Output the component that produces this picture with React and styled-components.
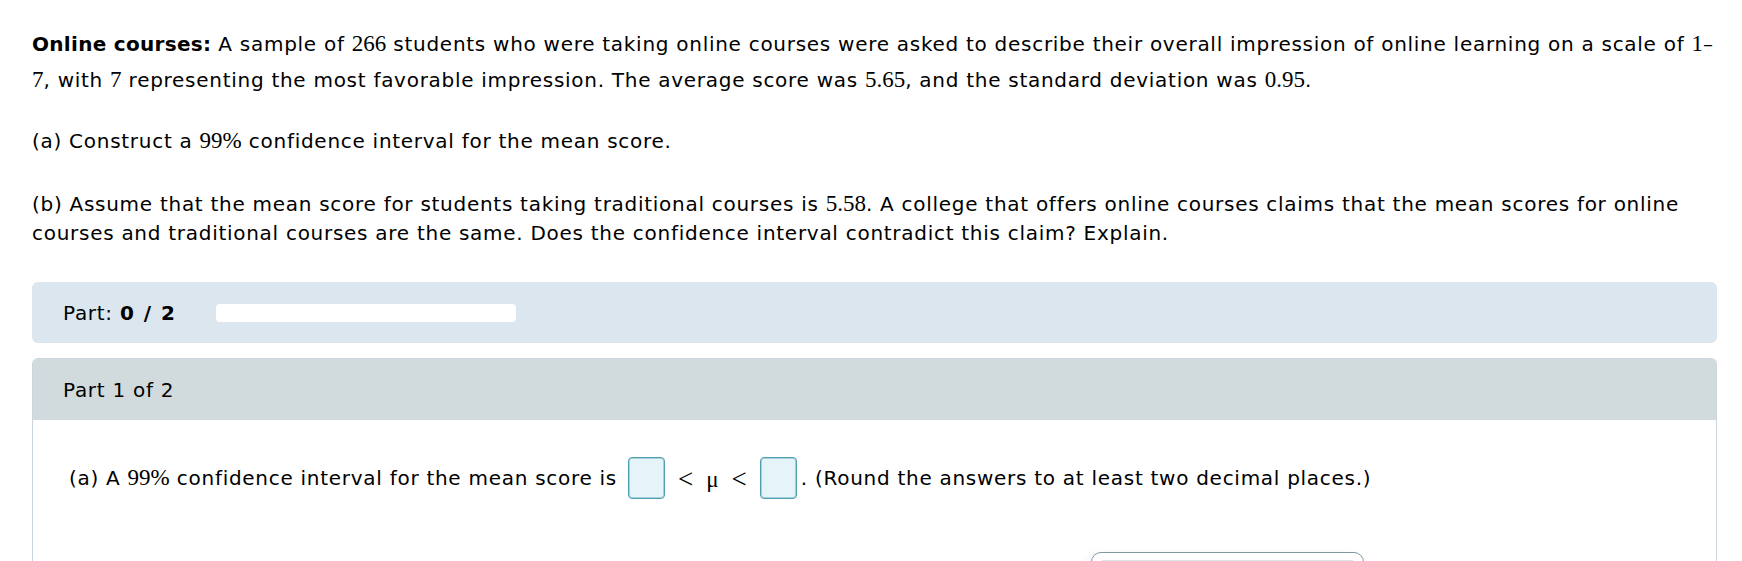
import React from "react";
import styled, { createGlobalStyle } from "styled-components";

const GlobalStyle = createGlobalStyle`
  body {
    margin: 0;
    background: #fff;
    color: #000;
    font-family: "DejaVu Sans", Verdana, sans-serif;
    font-size: 20px;
    letter-spacing: 0.72px;
  }
`;

const Page = styled.div`
  padding: 26px 25px 0 32px;
`;

const Para = styled.p`
  margin: ${(p) => p.$mt || 0}px 0 0 0;
  line-height: ${(p) => p.$lh || 29}px;
`;

const Bold = styled.b`
  font-weight: bold;
  letter-spacing: 0.3px;
`;

const M = styled.span`
  font-family: "Liberation Serif", "Times New Roman", serif;
  font-size: 23px;
  letter-spacing: 0;
`;

const ProgressPanel = styled.div`
  margin-top: 34px;
  height: 61px;
  background: #dbe6ef;
  border-radius: 6px;
  display: flex;
  align-items: center;
  padding-left: 31px;
  gap: 40px;
`;

const Score = styled(Bold)`
  letter-spacing: 1.5px;
`;

const Bar = styled.div`
  width: 300px;
  height: 18px;
  background: #fff;
  border-radius: 4px;
`;

const Card = styled.div`
  margin-top: 15px;
  border: 1px solid #cbd5db;
  border-bottom: none;
  border-radius: 6px 6px 0 0;
  overflow: hidden;
`;

const CardHeader = styled.div`
  height: 61px;
  background: #d1dadd;
  display: flex;
  align-items: center;
  padding-left: 30px;
`;

const CardBody = styled.div`
  padding: 37px 0 0 36px;
`;

const AnswerRow = styled.div`
  display: flex;
  align-items: center;
  height: 42px;
  white-space: pre;
`;

const AnswerBox = styled.span`
  display: inline-block;
  width: 35px;
  height: 40px;
  border: 1px solid #4f9fb0;
  border-radius: 4px;
  background: #e5f4f8;
  box-shadow: inset 0 0 0 1px #a8d0d9;
  margin: 0 ${(p) => p.$mr || 0}px 0 ${(p) => p.$ml || 0}px;
`;

const Rel = styled(M)`
  font-size: 27px;
  margin: 0 13px;
  position: relative;
  top: 1px;
`;

const Mu = styled(M)`
  position: relative;
  top: 2px;
`;

const ActionRow = styled.div`
  display: flex;
  padding-left: 1022px;
  margin-top: 53px;
`;

const Button = styled.div`
  width: 273px;
  height: 48px;
  border: 1px solid #8098a3;
  border-radius: 10px;
  box-shadow: -4px 2px 8px rgba(0, 0, 0, 0.06);
  padding: 7px 10px 0;
  box-sizing: border-box;
`;

const ButtonInner = styled.div`
  border-top: 2px solid #dde4e7;
  height: 20px;
`;

export default function App() {
  return (
    <>
      <GlobalStyle />
      <Page>
        <Para $lh={36}>
          <Bold>Online courses:</Bold> A sample of <M>266</M> students who were
          taking online courses were asked to describe their overall impression
          of online learning on a scale of <M>1</M>–<wbr />
          <M>7</M>, with <M>7</M> representing the most favorable impression.
          The average score was <M>5.65</M>, and the standard deviation was{" "}
          <M>0.95</M>.
        </Para>
        <Para $mt={28}>
          (a) Construct a <M>99%</M> confidence interval for the mean score.
        </Para>
        <Para $mt={33}>
          (b) Assume that the mean score for students taking traditional courses
          is <M>5.58</M>. A college that offers online courses claims that the
          mean scores for online courses and traditional courses are the same.
          Does the confidence interval contradict this claim? Explain.
        </Para>

        <ProgressPanel>
          <span>
            Part: <Score>0 / 2</Score>
          </span>
          <Bar />
        </ProgressPanel>

        <Card>
          <CardHeader>Part 1 of 2</CardHeader>
          <CardBody>
            <AnswerRow>
              (a) A <M>99%</M> confidence interval for the mean score is
              <AnswerBox $ml={11} />
              <Rel>&lt;</Rel>
              <Mu>μ</Mu>
              <Rel>&lt;</Rel>
              <AnswerBox $mr={4} />. (Round the answers to at least two decimal
              places.)
            </AnswerRow>
            <ActionRow>
              <Button>
                <ButtonInner />
              </Button>
            </ActionRow>
          </CardBody>
        </Card>
      </Page>
    </>
  );
}
